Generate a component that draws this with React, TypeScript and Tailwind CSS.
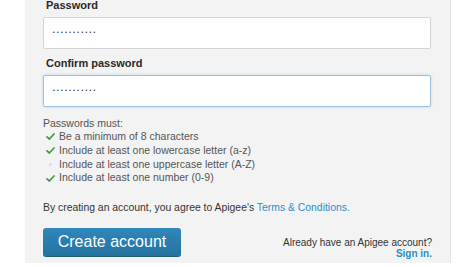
const rules = [
  { text: 'Be a minimum of 8 characters', ok: true },
  { text: 'Include at least one lowercase letter (a-z)', ok: true },
  { text: 'Include at least one uppercase letter (A-Z)', ok: false },
  { text: 'Include at least one number (0-9)', ok: true },
]

function Tick() {
  return (
    <svg width="9" height="7" viewBox="0 0 9 7" className="text-[#3f9b3c]">
      <path d="M1 3.8 L3.4 6 L8 1" fill="none" stroke="currentColor" strokeWidth="1.7" strokeLinecap="round" strokeLinejoin="round" />
    </svg>
  )
}

export default function App() {
  return (
    <div className="w-[474px] h-[267px] bg-white overflow-hidden" style={{ fontFamily: '"Liberation Sans", Arial, sans-serif' }}>
      <div className="ml-[25px] w-[426px] h-[265px] bg-[#f3f3f3] border-r border-[#e6e6e6] px-[18px] text-[#333]">
        <div className="-mt-[2px] pl-[3px] text-[11px] font-bold leading-[14px] text-[#2a2a2a]">Password</div>
        <div className="mt-[5px] w-[388px] h-[32px] bg-white border border-[#d4d4d4] rounded-[2px] px-[8px] flex items-center text-[13px] tracking-[0.45px] leading-none text-[#444] pb-[9px]">
          ...........
        </div>
        <div className="mt-[7px] pl-[3px] text-[11px] font-bold leading-[14px] text-[#2a2a2a]">Confirm password</div>
        <div className="mt-[5px] w-[388px] h-[32px] bg-white border border-[#9fc3de] shadow-[0_0_3px_#b7d4ea] rounded-[2px] px-[8px] flex items-center text-[13px] tracking-[0.45px] leading-none text-[#444] pb-[9px]">
          ...........
        </div>
        <div className="mt-[10px] text-[10.5px] leading-[13px] text-[#555]">Passwords must:</div>
        <ul className="text-[10.5px] leading-[13.8px] text-[#555]">
          {rules.map((r) => (
            <li key={r.text} className="flex items-center">
              <span className="w-[16px] flex justify-center pr-[1px]">
                {r.ok ? <Tick /> : <span className="w-[3px] h-[3px] rounded-full bg-[#dcdcdc]" />}
              </span>
              <span>{r.text}</span>
            </li>
          ))}
        </ul>
        <div className="mt-[16px] text-[10.4px] leading-[13px] text-[#333]">
          By creating an account, you agree to Apigee's{' '}
          <span className="text-[#2b8fc7]">Terms &amp; Conditions.</span>
        </div>
        <div className="mt-[14px] flex items-start justify-between">
          <button className="w-[138px] h-[29px] rounded-[3px] bg-gradient-to-b from-[#2f87bb] to-[#24739f] border-b border-[#1d5f85] text-white text-[16px] leading-[20px]">
            Create account
          </button>
          <div className="mt-[9px] text-right text-[10px] leading-[11px] text-[#333]">
            <div>Already have an Apigee account?</div>
            <div className="font-bold text-[#2b8fc7]">Sign in.</div>
          </div>
        </div>
      </div>
    </div>
  )
}
